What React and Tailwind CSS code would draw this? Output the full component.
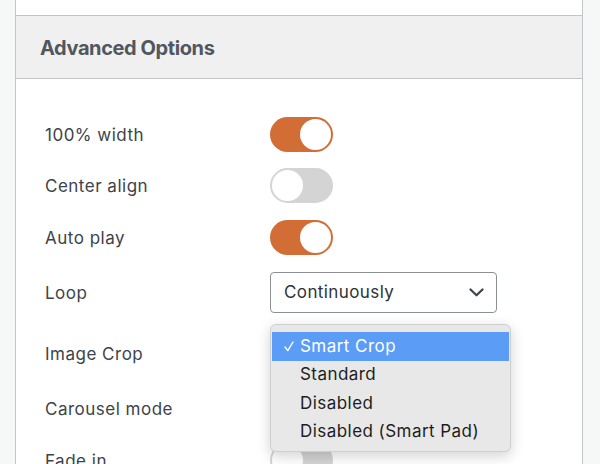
import React from 'react';

const font = { fontFamily: 'Inter, "Noto Sans", sans-serif' };

function Toggle({ on }) {
  return on ? (
    <div className="w-[63px] h-[35px] rounded-full bg-[#d26d35] p-[2px] flex justify-end">
      <div className="w-[31px] h-[31px] rounded-full bg-white" />
    </div>
  ) : (
    <div className="w-[63px] h-[35px] rounded-full bg-[#d4d4d4] border-[2px] border-[#d4d4d4] flex justify-start">
      <div className="w-[31px] h-[31px] rounded-full bg-white" />
    </div>
  );
}

function Chevron() {
  return (
    <svg width="15" height="9" viewBox="0 0 15 9" fill="none">
      <path d="M1.5 1.5 L7.5 7.3 L13.5 1.5" stroke="#3c434a" strokeWidth="2.2" strokeLinecap="round" strokeLinejoin="round" />
    </svg>
  );
}

function Select({ value }) {
  return (
    <div className="w-[227px] h-[41px] rounded-[4px] border border-[#8c8f94] bg-white flex items-center justify-between pl-[13px] pr-[12px] text-[17px] tracking-[0.4px] text-[#2c3338]">
      <span className="pt-[1px]">{value}</span>
      {value && <Chevron />}
    </div>
  );
}

function Row({ label, children, className }) {
  return (
    <div className={'flex items-center ' + className}>
      <div className="w-[225px] pt-[3px] text-[17px] tracking-[0.5px] text-[#3c434a]">{label}</div>
      {children}
    </div>
  );
}

const options = ['Smart Crop', 'Standard', 'Disabled', 'Disabled (Smart Pad)'];

export default function App() {
  return (
    <div className="w-[600px] h-[464px] bg-[#f6f7f7] overflow-hidden relative pl-[15px] pr-[17px]" style={font}>
      <div className="h-full bg-white border-x border-[#c3c4c7]">
        <div className="h-[15px]" />
        <div className="h-[64px] bg-[#f0f0f1] border-y border-[#c3c4c7] flex items-center pl-[24px]">
          <h2 className="pt-[1px] text-[20px] font-bold text-[#50575e] tracking-[-0.4px]">Advanced Options</h2>
        </div>
        <div className="pl-[29px] pt-[38px] flex flex-col">
          <Row label="100% width" className="h-[35px]"><Toggle on /></Row>
          <Row label="Center align" className="h-[35px] mt-[16px]"><Toggle /></Row>
          <Row label="Auto play" className="h-[35px] mt-[17px]"><Toggle on /></Row>
          <Row label="Loop" className="h-[41px] mt-[17px]"><Select value="Continuously" /></Row>
          <Row label="Image Crop" className="h-[41px] mt-[20px]"><Select value="" /></Row>
          <Row label="Carousel mode" className="h-[35px] mt-[17px]"><Toggle /></Row>
          <Row label="Fade in" className="h-[35px] mt-[17px]"><Toggle /></Row>
        </div>
      </div>

      <div className="absolute left-[270px] top-[324px] w-[241px] h-[128px] rounded-[6px] bg-[#e8e8e8] border border-[#cfcfcf] shadow-[0_4px_14px_rgba(0,0,0,0.18)] pt-[7px] px-[1px]">
        {options.map((o, i) => (
          <div
            key={o}
            className={
              'h-[28.5px] flex items-center text-[17px] tracking-[0.45px] ' +
              (i === 0 ? 'bg-[#5b9cf6] text-white' : 'text-[#1e1e1e]')
            }
          >
            <span className="w-[28px] flex justify-end pr-[6px]">
              {i === 0 && (
                <svg width="10" height="11" viewBox="0 0 10 11" fill="none">
                  <path d="M1 6 L3.8 9.6 L9 1" stroke="white" strokeWidth="1.4" strokeLinecap="round" strokeLinejoin="round" />
                </svg>
              )}
            </span>
            <span>{o}</span>
          </div>
        ))}
      </div>
    </div>
  );
}
